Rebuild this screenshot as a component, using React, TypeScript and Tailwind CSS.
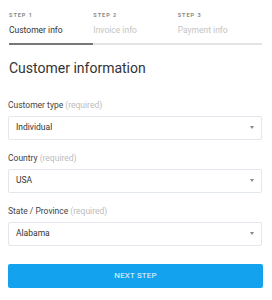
import React from 'react'

const steps = [
  { step: 'STEP 1', name: 'Customer info', active: true },
  { step: 'STEP 2', name: 'Invoice info', active: false },
  { step: 'STEP 3', name: 'Payment info', active: false },
]

const fields = [
  { label: 'Customer type', value: 'Individual' },
  { label: 'Country', value: 'USA' },
  { label: 'State / Province', value: 'Alabama' },
]

function SelectField({ label, value }: { label: string; value: string }) {
  return (
    <div className="mt-[12px] first:mt-0">
      <div className="text-[8.5px] leading-[12px] text-[#444] mb-[5px]">
        {label} <span className="text-[#bbb]">(required)</span>
      </div>
      <div className="h-[24px] border border-[#e2e7ed] rounded-[2px] flex items-center justify-between pl-[7px] pr-[7px] bg-white">
        <span className="text-[8.5px] text-[#333]">{value}</span>
        <span className="w-0 h-0 border-l-[2.5px] border-r-[2.5px] border-t-[3px] border-l-transparent border-r-transparent border-t-[#888]" />
      </div>
    </div>
  )
}

export default function App() {
  return (
    <div
      className="w-[272px] h-[300px] bg-white pt-[11px] pl-[9px] pr-[10px]"
      style={{ fontFamily: 'Roboto, "Liberation Sans", sans-serif' }}
    >
      <div className="grid grid-cols-3">
        {steps.map((s) => (
          <div key={s.step}>
            <div className="text-[5.5px] leading-[8px] font-bold tracking-[0.18em] text-[#8a8a8a]">
              {s.step}
            </div>
            <div
              className={`mt-[5px] text-[8.5px] leading-[12px] ${
                s.active ? 'text-[#333]' : 'text-[#c4c4c4]'
              }`}
            >
              {s.name}
            </div>
          </div>
        ))}
      </div>
      <div className="mt-[7px] h-[1.5px] bg-[#e3e3e3] flex">
        <div className="w-1/3 bg-[#777]" />
      </div>

      <h1 className="mt-[13px] text-[14px] leading-[20px] text-[#333]">Customer information</h1>

      <div className="mt-[21px] -ml-[1px]">
        {fields.map((f) => (
          <SelectField key={f.label} label={f.label} value={f.value} />
        ))}
      </div>

      <button className="mt-[18px] -ml-[1px] w-[255px] h-[24px] rounded-[2px] bg-[#13a3ee] text-[#eef8ff] text-[8px] tracking-[0.02em]">
        NEXT STEP
      </button>
    </div>
  )
}
